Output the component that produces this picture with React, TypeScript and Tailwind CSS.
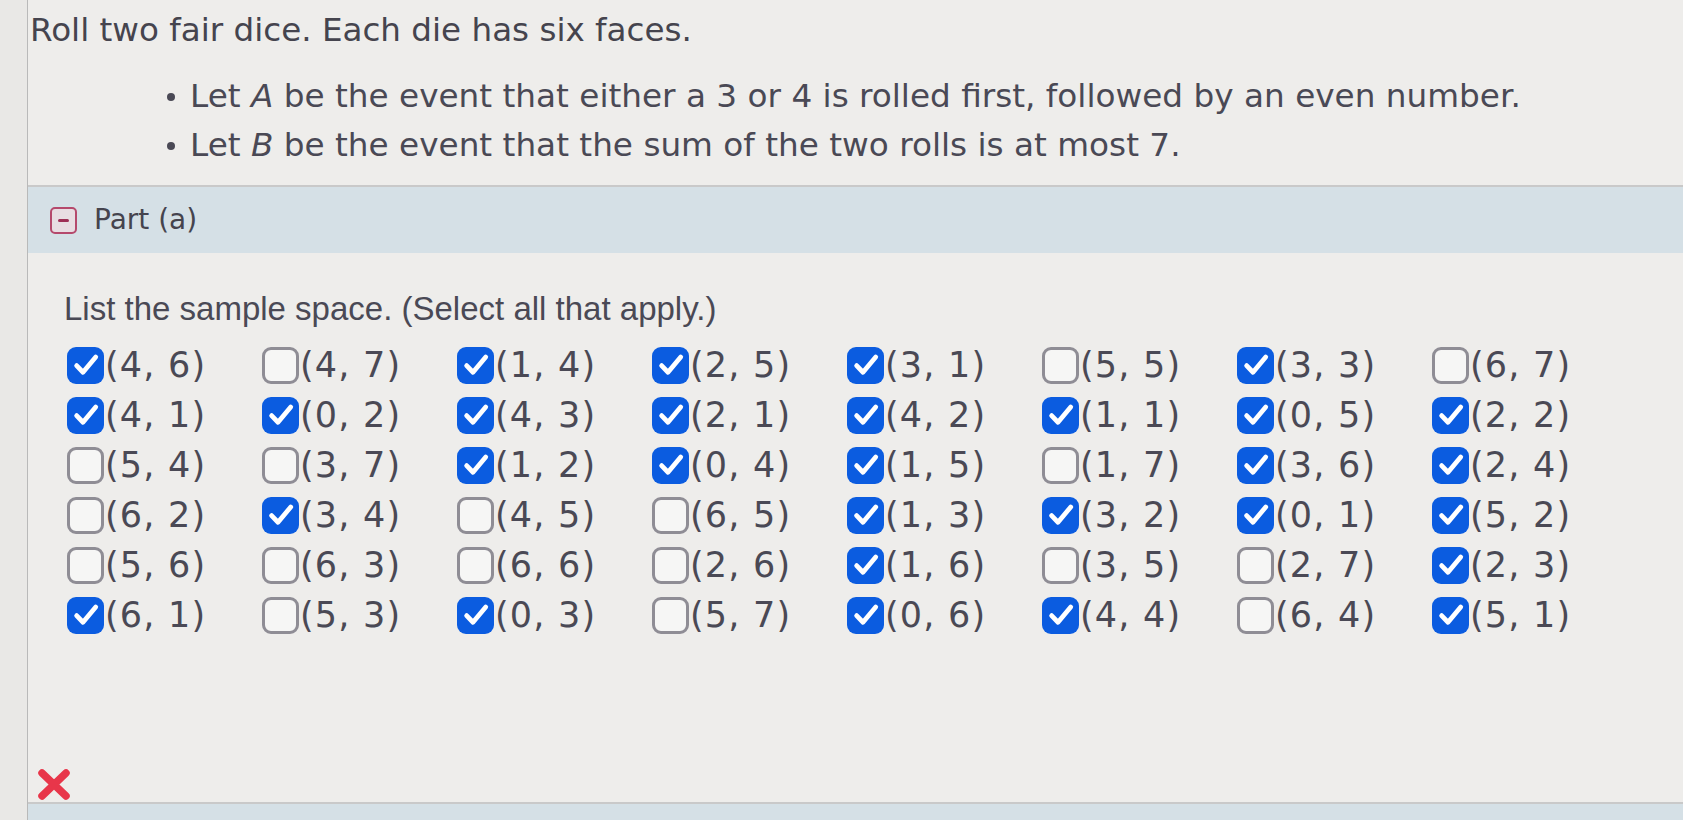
import React from "react";

const ITEMS: [string, boolean][][] = [
  [["(4, 6)", true], ["(4, 7)", false], ["(1, 4)", true], ["(2, 5)", true], ["(3, 1)", true], ["(5, 5)", false], ["(3, 3)", true], ["(6, 7)", false]],
  [["(4, 1)", true], ["(0, 2)", true], ["(4, 3)", true], ["(2, 1)", true], ["(4, 2)", true], ["(1, 1)", true], ["(0, 5)", true], ["(2, 2)", true]],
  [["(5, 4)", false], ["(3, 7)", false], ["(1, 2)", true], ["(0, 4)", true], ["(1, 5)", true], ["(1, 7)", false], ["(3, 6)", true], ["(2, 4)", true]],
  [["(6, 2)", false], ["(3, 4)", true], ["(4, 5)", false], ["(6, 5)", false], ["(1, 3)", true], ["(3, 2)", true], ["(0, 1)", true], ["(5, 2)", true]],
  [["(5, 6)", false], ["(6, 3)", false], ["(6, 6)", false], ["(2, 6)", false], ["(1, 6)", true], ["(3, 5)", false], ["(2, 7)", false], ["(2, 3)", true]],
  [["(6, 1)", true], ["(5, 3)", false], ["(0, 3)", true], ["(5, 7)", false], ["(0, 6)", true], ["(4, 4)", true], ["(6, 4)", false], ["(5, 1)", true]],
];

const verdana = "font-['DejaVu_Sans',Verdana,sans-serif]";

function Box({ checked }: { checked: boolean }) {
  if (checked) {
    return (
      <span className="grid h-[37px] w-[37px] shrink-0 place-items-center rounded-[9px] bg-[#0b5ce0]">
        <svg width="30" height="30" viewBox="0 0 24 24" fill="none">
          <path
            d="M4.5 12.5 L9.6 17.8 L19.8 5.6"
            stroke="white"
            strokeWidth="3.8"
            strokeLinecap="round"
            strokeLinejoin="round"
          />
        </svg>
      </span>
    );
  }
  return (
    <span className="h-[37px] w-[37px] shrink-0 rounded-[9px] border-[3px] border-[#8f8d95] bg-[#f6f6f5]" />
  );
}

function Bullet({ children }: { children: React.ReactNode }) {
  return (
    <li className="flex items-center">
      <span className="mr-[15px] h-[8px] w-[8px] rounded-full bg-[#4a4955]" />
      <span>{children}</span>
    </li>
  );
}

export default function App() {
  return (
    <div className="flex h-[820px] w-[1683px] overflow-hidden bg-[#eeedeb] text-[#4a4955]">
      {/* strip on the left */}
      <div className="w-[28px] shrink-0 border-r border-[#b9b9b9] bg-[#e9e8e6]" />

      <div className="flex min-w-0 flex-1 flex-col">
        {/* question */}
        <div className={`px-[2px] pt-[10px] ${verdana}`}>
          <p className="text-[32.6px] leading-[40px] text-[#45444e]">
            Roll two fair dice. Each die has six faces.
          </p>
          <ul className="mt-[22px] pl-[137px] text-[32.7px] leading-[49px]">
            <Bullet>
              Let <i>A</i> be the event that either a 3 or 4 is rolled first,
              followed by an even number.
            </Bullet>
            <Bullet>
              Let <i>B</i> be the event that the sum of the two rolls is at most 7.
            </Bullet>
          </ul>
        </div>

        {/* Part (a) band */}
        <div className="mt-[15px] flex h-[68px] items-center gap-[17px] border-t-2 border-[#c9c9c9] bg-[#d5e0e6] pl-[22px]">
          <span className="grid h-[27px] w-[27px] place-items-center rounded-[5px] border-[2.5px] border-[#b5496c] bg-[#e8dde2]">
            <span className="h-[3px] w-[11px] rounded-sm bg-[#9e2f55]" />
          </span>
          <span className={`text-[28px] text-[#45444e] ${verdana}`}>Part (a)</span>
        </div>

        {/* answer area */}
        <div className="flex-1 pl-[36px] pt-[36px]">
          <p className="font-['Liberation_Sans',Arial,sans-serif] text-[33px] leading-[40px]">
            List the sample space. (Select all that apply.)
          </p>
          <div className={`mt-[11px] grid grid-cols-[repeat(8,195px)] pl-[3px] ${verdana}`}>
            {ITEMS.flat().map(([label, checked], i) => (
              <label key={i} className="flex h-[50px] items-center gap-[1px]">
                <Box checked={checked} />
                <span className="text-[35px] leading-none tracking-[1.2px]">{label}</span>
              </label>
            ))}
          </div>
        </div>

        {/* result mark */}
        <div className="flex h-[36px] items-start pl-[8px] pt-[2px]">
          <svg width="36" height="33" viewBox="0 0 36 33">
            <path
              d="M6 5 L30 28 M30 5 L6 28"
              stroke="#e8364a"
              strokeWidth="7.5"
              strokeLinecap="round"
            />
          </svg>
        </div>
        <div className="h-[18px] border-t-2 border-[#c9c9c9] bg-[#d5e0e6]" />
      </div>
    </div>
  );
}
